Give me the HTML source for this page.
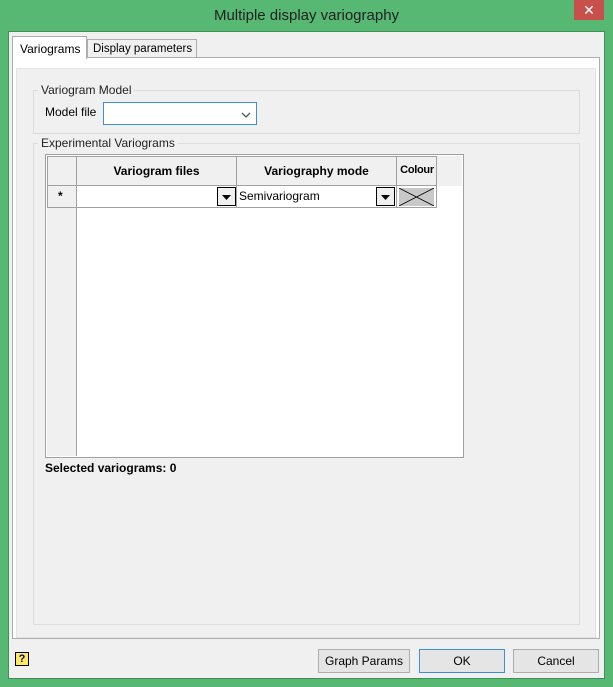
<!DOCTYPE html>
<html><head><style>
body{margin:0;width:613px;height:687px;background:#56b873;position:relative;overflow:hidden;font-family:"Liberation Sans",sans-serif;font-size:12px;color:#000}
.a{position:absolute;box-sizing:border-box;white-space:nowrap}
</style></head><body>
<div class="a" style="left:0;top:0;width:613px;height:31px;text-align:center;line-height:31px;font-size:15px;color:#222">Multiple display variography</div>
<div class="a" style="left:574px;top:0;width:30px;height:20px;background:#c7504c;color:#fff;text-align:center;line-height:20px;font-size:14px">✕</div>
<div class="a" style="left:8px;top:31px;width:597px;height:648px;background:#f0f0f0;border:1px solid #3f8f59"></div>
<div class="a" style="left:12px;top:57px;width:588px;height:582px;border:1px solid #adadad;background:#fff"></div>
<div class="a" style="left:16px;top:68px;width:580px;height:570px;background:#f0f0f0;border:1px solid #e3e3e3"></div>
<div class="a" style="left:12px;top:36px;width:75px;height:23px;background:#fff;border:1px solid #adadad;border-bottom:none;padding:5px 0 0 7px">Variograms</div>
<div class="a" style="left:87px;top:39px;width:110px;height:19px;background:#f0f0f0;border:1px solid #adadad;padding:3px 0 0 5px;font-size:11.5px">Display parameters</div>
<div class="a" style="left:33px;top:90px;width:547px;height:44px;border:1px solid #dcdcdc"></div>
<div class="a" style="left:38px;top:83px;background:#f0f0f0;padding:0 3px;color:#222">Variogram Model</div>
<div class="a" style="left:45px;top:105px">Model file</div>
<div class="a" style="left:103px;top:102px;width:154px;height:23px;border:1px solid #3c8ee0;background:#fff"><svg width="10" height="6" style="position:absolute;right:5px;top:9px"><path d="M1 1l4 4 4-4" fill="none" stroke="#555" stroke-width="1.3"/></svg></div>
<div class="a" style="left:33px;top:143px;width:547px;height:482px;border:1px solid #dcdcdc"></div>
<div class="a" style="left:38px;top:136px;background:#f0f0f0;padding:0 3px;color:#222">Experimental Variograms</div>
<div class="a" style="left:45px;top:154px;width:419px;height:304px;border:1px solid #a0a0a0;background:#fff"></div>
<div class="a" style="left:47px;top:156px;width:415px;height:30px;background:#f0f0f0"></div>
<div class="a" style="left:47px;top:156px;width:30px;height:300px;background:#f0f0f0;border-right:1px solid #a0a0a0"></div>
<div class="a" style="left:47px;top:156px;width:390px;height:52px;border:1px solid #a0a0a0"></div>
<div class="a" style="left:47px;top:185px;width:390px;height:1px;background:#a0a0a0"></div>
<div class="a" style="left:47px;top:207px;width:30px;height:1px;background:#a0a0a0"></div>
<div class="a" style="left:236px;top:156px;width:1px;height:52px;background:#a0a0a0"></div>
<div class="a" style="left:396px;top:156px;width:1px;height:52px;background:#a0a0a0"></div>
<div class="a" style="left:77px;top:164px;width:159px;text-align:center;font-weight:bold">Variogram files</div>
<div class="a" style="left:237px;top:164px;width:159px;text-align:center;font-weight:bold">Variography mode</div>
<div class="a" style="left:397px;top:164px;width:40px;text-align:center;font-weight:bold;font-size:11px;letter-spacing:-0.3px">Colour</div>
<div class="a" style="left:58px;top:189px;font-weight:bold">*</div>
<div class="a" style="left:217px;top:187px;width:19px;height:19px;border:1px solid #000;background:#f0f0f0"><svg width="17" height="17" style="position:absolute;left:0;top:0"><path d="M4 7h9l-4.5 5z" fill="#000"/></svg></div>
<div class="a" style="left:239px;top:189px">Semivariogram</div>
<div class="a" style="left:376px;top:187px;width:19px;height:19px;border:1px solid #000;background:#f0f0f0"><svg width="17" height="17" style="position:absolute;left:0;top:0"><path d="M4 7h9l-4.5 5z" fill="#000"/></svg></div>
<div class="a" style="left:399px;top:188px;width:35px;height:18px;background:#c8c8c8"><svg width="35" height="18" style="position:absolute;left:0;top:0"><path d="M0 0L35 18M35 0L0 18" stroke="#000" stroke-width="0.8"/></svg></div>
<div class="a" style="left:45px;top:461px;font-weight:bold">Selected variograms: 0</div>
<div class="a" style="left:15px;top:652px;width:14px;height:14px;background:#ffe95c;border:1px solid #000;font-weight:bold;font-size:11px;text-align:center;line-height:13px;color:#000080">?</div>
<div class="a" style="left:318px;top:649px;width:92px;height:24px;border:1px solid #adadad;background:#e5e5e5;text-align:center;line-height:22px">Graph Params</div>
<div class="a" style="left:419px;top:649px;width:86px;height:24px;border:1px solid #3c8ee0;background:#e5e5e5;text-align:center;line-height:22px">OK</div>
<div class="a" style="left:513px;top:649px;width:86px;height:24px;border:1px solid #adadad;background:#e5e5e5;text-align:center;line-height:22px">Cancel</div>
</body></html>
